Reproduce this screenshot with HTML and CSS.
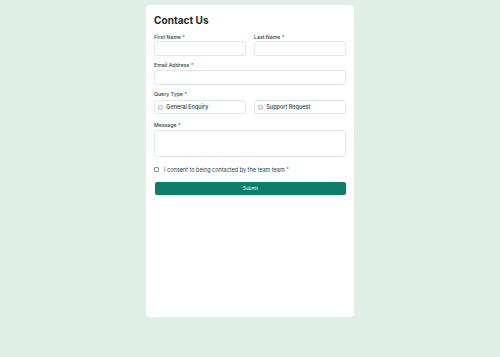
FILE: index.html
```html
<!DOCTYPE html>
<html lang="en">
<head>
<meta charset="utf-8">
<title>Contact Us</title>
<link rel="stylesheet" href="styles.css">
</head>
<body>
<main class="card">
  <h1 class="title">Contact Us</h1>
  <form class="form">
    <div class="row">
      <div class="field">
        <label class="label">First Name <span class="req">*</span></label>
        <div class="input"></div>
      </div>
      <div class="field">
        <label class="label">Last Name <span class="req">*</span></label>
        <div class="input"></div>
      </div>
    </div>
    <div class="field">
      <label class="label">Email Address <span class="req">*</span></label>
      <div class="input"></div>
    </div>
    <div class="field field-query">
      <label class="label">Query Type <span class="req">*</span></label>
      <div class="row">
        <div class="radio-box"><span class="radio"></span>General Enquiry</div>
        <div class="radio-box"><span class="radio"></span>Support Request</div>
      </div>
    </div>
    <div class="field">
      <label class="label">Message <span class="req">*</span></label>
      <div class="textarea"></div>
    </div>
    <div class="consent"><span class="check"></span><span>I consent to being contacted by the team team <span class="req">*</span></span></div>
    <div class="submit">Submit</div>
  </form>
</main>
</body>
</html>
```

FILE: styles.css
```css
* { box-sizing: border-box; }
body {
  margin: 0;
  background: #dfefe5;
  font-family: Inter, "Noto Sans", sans-serif;
  color: #2a4244;
  height: 357px;
}
.card {
  width: 208px;
  height: 312px;
  margin: 5px auto 0;
  background: #ffffff;
  border-radius: 4px;
  padding: 8.9px 8px 8px;
}
.title {
  margin: 0 0 7.1px;
  font-size: 10px;
  line-height: 13px;
  font-weight: 700;
  color: #1c2a2b;
  letter-spacing: 0.05px;
}
.form {
  display: flex;
  flex-direction: column;
}
.row {
  display: flex;
  gap: 8px;
}
.row > * { flex: 1; }
.field {
  display: flex;
  flex-direction: column;
  margin-bottom: 6px;
}
.label {
  font-size: 5.2px;
  line-height: 6px;
  font-weight: 500;
  color: #2a4244;
  margin-bottom: 1.5px;
}
.field-query { margin-bottom: 8px; }
.field-query .label { margin-bottom: 3.5px; }
.req { color: #0c7d69; }
.input {
  height: 15px;
  border: 1px solid #d9ebe4;
  border-radius: 3px;
}
.radio-box {
  height: 14px;
  border: 1px solid #d9ebe4;
  border-radius: 3px;
  display: flex;
  align-items: center;
  padding-left: 3.3px;
  font-size: 5.5px;
  font-weight: 500;
  color: #2a4244;
}
.radio {
  width: 5px;
  height: 5px;
  border: 0.6px solid #aab4b4;
  border-radius: 50%;
  margin-right: 3px;
}
.textarea {
  height: 27.5px;
  border: 1px solid #d9ebe4;
  border-radius: 3px;
}
.consent {
  display: flex;
  align-items: center;
  font-size: 5.5px;
  line-height: 6px;
  color: #2a4244;
  margin-top: 3.5px;
}
.check {
  width: 5px;
  height: 5px;
  border: 0.6px solid #8a9696;
  border-radius: 1px;
  margin-right: 5px;
}
.submit {
  height: 13px;
  margin-top: 9.5px;
  margin-left: 1px;
  background: #0c7d69;
  border-radius: 2px;
  color: #ffffff;
  font-size: 4.5px;
  display: flex;
  align-items: center;
  justify-content: center;
}
```
